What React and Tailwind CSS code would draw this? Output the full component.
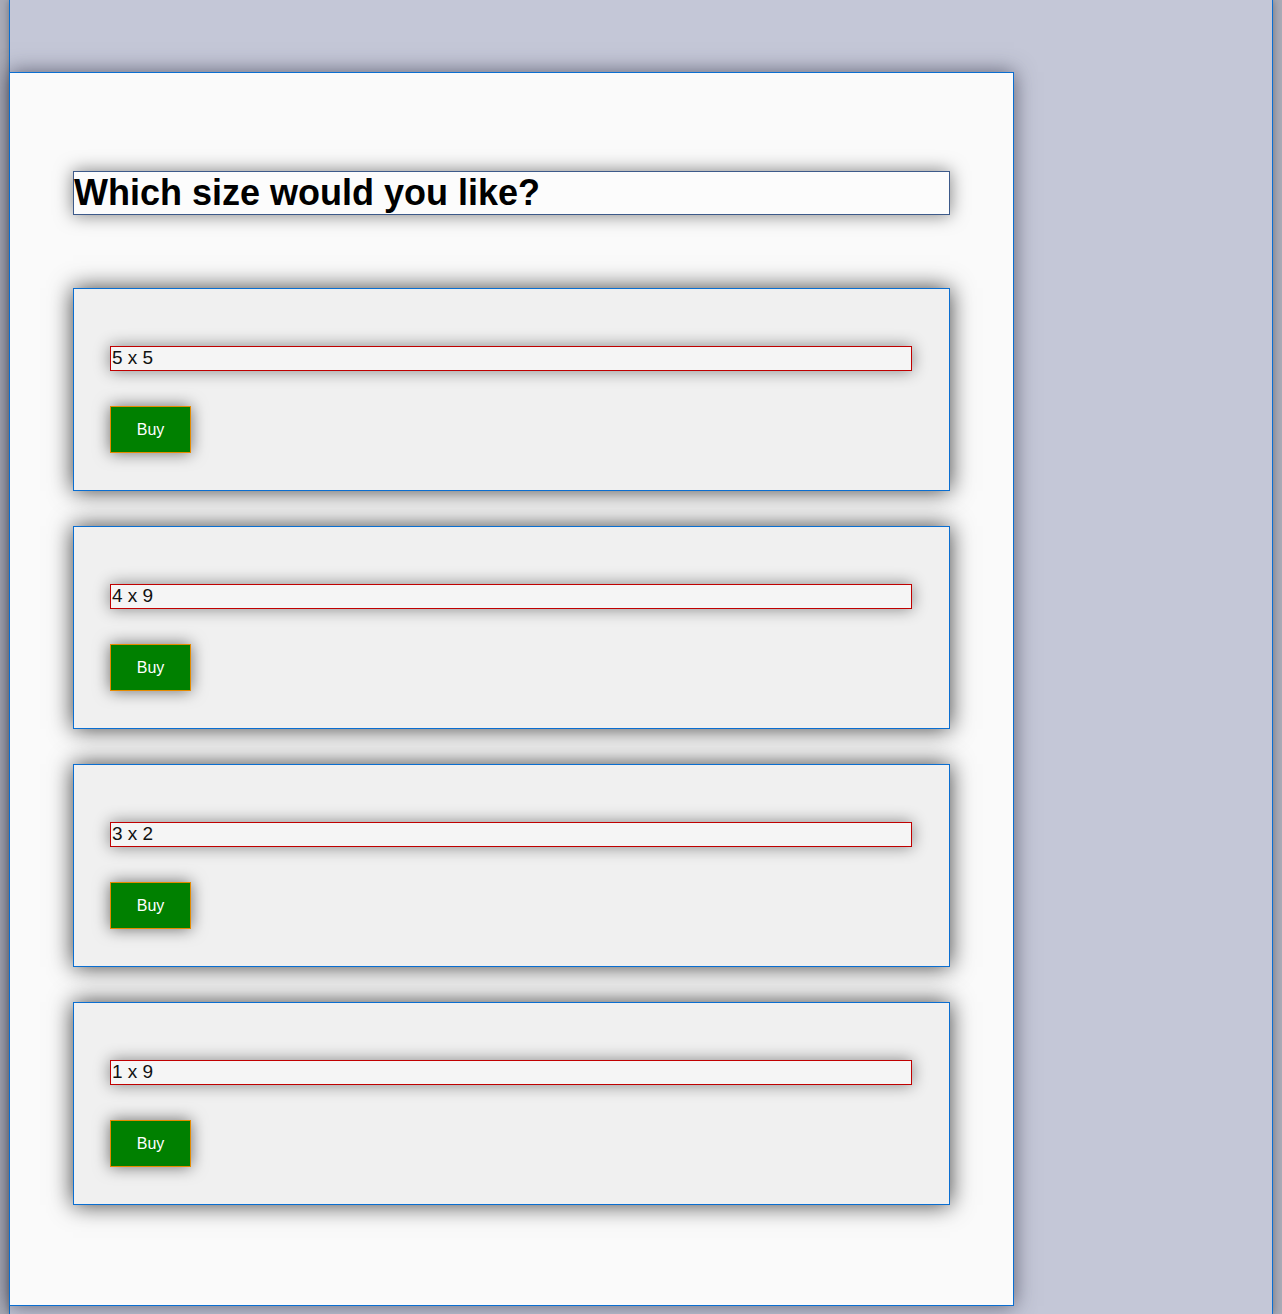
import React from "react";

const sizes = ["5 x 5", "4 x 9", "3 x 2", "1 x 9"];

const SizeCard = ({ label }) => {
  return (
    <div className="bg-[#f0f0f0] border border-[#0a6ed1] shadow-[0_0_22px_rgba(0,0,0,0.75)] pl-[36px] pr-[37px] pt-[57px] pb-[37px] flex flex-col items-start gap-[35px]">
      <div className="w-full h-[25px] border border-[#c00000] bg-[#f5f5f5] text-[19px] leading-[21px] pl-[1px] text-[#111] shadow-[0_0_16px_rgba(0,0,0,0.45)]">
        {label}
      </div>
      <button className="w-[81px] h-[47px] bg-[#008000] border border-[#e68a00] text-white text-[16px] shadow-[0_0_16px_rgba(0,0,0,0.55)]">
        Buy
      </button>
    </div>
  );
};

export default function App() {
  return (
    <div className="min-h-screen bg-[#a9abb7] font-['Liberation_Sans',Arial,sans-serif]">
      <div className="mx-auto w-[1264px] min-h-screen bg-[#c4c7d7] border-x border-[#0a6ed1] shadow-[0_0_8px_rgba(0,0,0,0.35)] pt-[72px] pb-[8px]">
        <div className="-ml-px w-[1005px] bg-[#fafafa] border border-[#0a6ed1] shadow-[0_0_20px_rgba(60,62,80,0.75)] pl-[63px] pr-[63px] pt-[98px] pb-[100px]">
          <h1 className="h-[44px] border border-[#3d5a8a] bg-[#fcfcfc] text-[36px] leading-[42px] font-bold text-black shadow-[0_0_18px_rgba(0,0,0,0.5)]">
            Which size would you like?
          </h1>
          <div className="mt-[73px] flex flex-col gap-[35px]">
            {sizes.map((s) => (
              <SizeCard key={s} label={s} />
            ))}
          </div>
        </div>
      </div>
    </div>
  );
}
